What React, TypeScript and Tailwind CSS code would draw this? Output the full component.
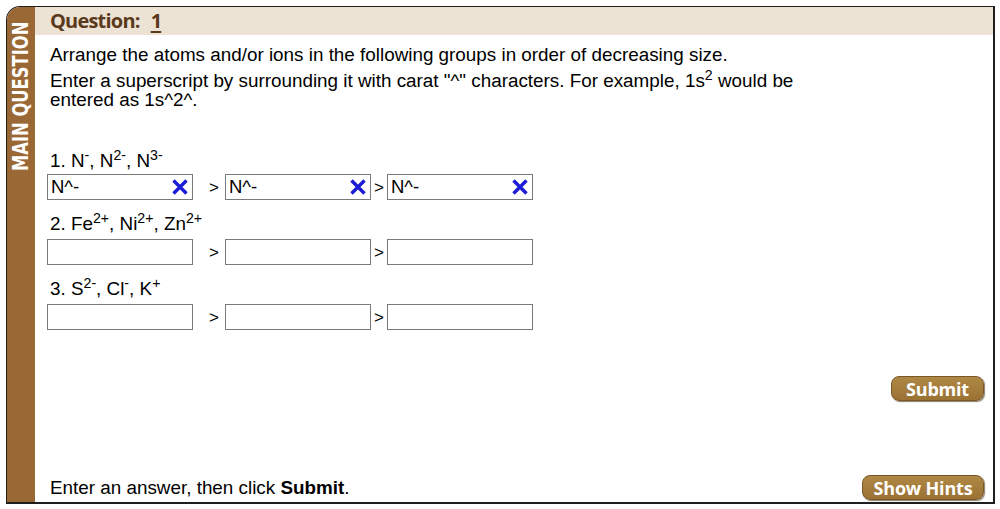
import React from "react";

function XIcon() {
  return (
    <svg width="18" height="18" viewBox="0 0 18 18" className="shrink-0">
      <path d="M2.5 2.5 L15.5 15.5 M15.5 2.5 L2.5 15.5" stroke="#1c1cd6" strokeWidth="3.4" strokeLinecap="butt" />
    </svg>
  );
}

function Box({ value }: { value?: string }) {
  return (
    <div className="w-[146px] h-[26px] border border-[#7a7a7a] bg-white flex items-center justify-between pl-[3px] pr-[3px] text-[18.5px] leading-none">
      <span>{value ?? ""}</span>
      {value ? <XIcon /> : null}
    </div>
  );
}

function Row({ filled }: { filled?: boolean }) {
  const v = filled ? "N^-" : undefined;
  return (
    <div className="flex items-center h-[26px]">
      <Box value={v} />
      <div className="w-[32px] flex justify-end pr-[6px] text-[17px]">&gt;</div>
      <Box value={v} />
      <div className="w-[16px] flex justify-center text-[17px]">&gt;</div>
      <Box value={v} />
    </div>
  );
}

function Btn({ label, w }: { label: string; w: string }) {
  return (
    <div
      className={`${w} h-[25px] rounded-[8px] bg-linear-to-b from-[#b08845] to-[#9a7234] border border-[#7a5826] shadow-[1px_1px_1px_rgba(60,40,10,0.6)] flex items-center justify-center text-white font-bold text-[18px] leading-none font-['Open_Sans',sans-serif] tracking-[-0.2px]`}
    >
      {label}
    </div>
  );
}

export default function App() {
  return (
    <div className="w-[1000px] h-[509px] bg-white pt-[6px] pl-[6px] font-['Liberation_Sans',Arial,sans-serif] text-black">
      <div className="w-[989px] h-[498px] border-l border-t border-r-2 border-b-2 border-[#1e1e1e] rounded-tl-[14px] overflow-hidden flex">
        <div className="w-[28px] shrink-0 bg-[#9a6835] flex justify-center items-start">
          <span className="mt-[3px] [writing-mode:vertical-rl] rotate-180 scale-y-[0.865] text-white font-bold text-[21px] leading-none font-['DejaVu_Sans_Condensed','DejaVu_Sans',sans-serif]">
            MAIN QUESTION
          </span>
        </div>
        <div className="flex-1 flex flex-col">
          <div className="h-[28px] bg-[#ece3d5] pl-[15px] flex items-center">
            <span className="font-['Open_Sans',sans-serif] font-bold text-[20px] text-[#5b3a1c] leading-none tracking-[-0.8px]">
              Question:<span className="ml-[11px] underline underline-offset-[3px] decoration-[1.5px]">1</span>
            </span>
          </div>
          <div className="pl-[15px] pr-[9px] flex flex-col flex-1 pb-[2px] text-[18.85px] leading-[19px]">
            <p className="mt-[10px]">Arrange the atoms and/or ions in the following groups in order of decreasing size.</p>
            <p className="mt-[7px]">
              Enter a superscript by surrounding it with carat "^" characters. For example, 1s<sup>2</sup> would be
              <br />
              entered as 1s^2^.
            </p>

            <div className="mt-[42px]">
              1. N<sup>-</sup>, N<sup>2-</sup>, N<sup>3-</sup>
            </div>
            <div className="mt-[4px] -ml-[3px]">
              <Row filled />
            </div>

            <div className="mt-[14px]">
              2. Fe<sup>2+</sup>, Ni<sup>2+</sup>, Zn<sup>2+</sup>
            </div>
            <div className="mt-[6px] -ml-[3px]">
              <Row />
            </div>

            <div className="mt-[14px]">
              3. S<sup>2-</sup>, Cl<sup>-</sup>, K<sup>+</sup>
            </div>
            <div className="mt-[6px] -ml-[3px]">
              <Row />
            </div>

            <div className="mt-[46px] flex justify-end">
              <Btn label="Submit" w="w-[93px]" />
            </div>

            <div className="mt-auto flex items-center justify-between">
              <span>
                Enter an answer, then click <b>Submit</b>.
              </span>
              <Btn label="Show Hints" w="w-[122px]" />
            </div>
          </div>
        </div>
      </div>
    </div>
  );
}
